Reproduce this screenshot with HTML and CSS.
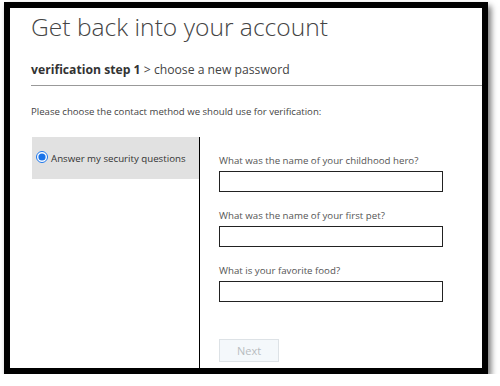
FILE: index.html
```html
<!doctype html>
<html lang="en">
<head>
    <meta charset="UTF-8">
    <title>Get back into your account</title>
    <link rel="stylesheet" href="styles.css">
</head>
<body>
<div class="frame">
    <div class="head">
        <h1 class="title">Get back into your account</h1>
        <div class="steps"><b>verification step 1</b> &gt; choose a new password</div>
    </div>
    <p class="intro">Please choose the contact method we should use for verification:</p>
    <div class="body">
        <div class="methods">
            <label class="method active">
                <input type="radio" name="method" checked>
                <span>Answer my security questions</span>
            </label>
        </div>
        <div class="questions">
            <div class="field">
                <div class="q">What was the name of your childhood hero?</div>
                <input type="text" class="answer">
            </div>
            <div class="field">
                <div class="q">What was the name of your first pet?</div>
                <input type="text" class="answer">
            </div>
            <div class="field">
                <div class="q">What is your favorite food?</div>
                <input type="text" class="answer">
            </div>
            <button class="next" disabled>Next</button>
        </div>
    </div>
</div>
</body>
</html>
```

FILE: styles.css
```css
*{
    padding: 0;
    margin: 0;
    box-sizing: border-box;
}
body{
    background-color: #ffffff;
    font-family: "Open Sans", "Noto Sans", sans-serif;
    color: #333333;
}

.frame{
    margin: 2px 0 0 4px;
    width: 484px;
    height: 372px;
    border: 6px solid #000000;
    background-color: #ffffff;
    box-shadow: 3px 4px 6px rgba(0, 0, 0, 0.55);
    display: flex;
    flex-direction: column;
}

.head{
    margin-left: 21px;
    border-bottom: 1px solid #999999;
}
.title{
    font-weight: 300;
    font-size: 24.6px;
    line-height: 34px;
    padding-top: 2px;
    color: #444444;
}
.steps{
    font-size: 12.2px;
    line-height: 18px;
    color: #444444;
    padding: 17px 0 6px;
}
.steps b{
    font-weight: 700;
    color: #333333;
}

.intro{
    font-size: 9.6px;
    line-height: 14px;
    color: #444444;
    margin: 19px 0 0 21px;
}

.body{
    flex: 1;
    display: flex;
    margin: 18px 0 0 22px;
}
.methods{
    width: 168px;
    border-right: 1px solid #000000;
}
.method{
    display: flex;
    align-items: center;
    height: 42px;
    padding-left: 4px;
    background-color: #e1e1e1;
    font-size: 9.7px;
    color: #333333;
}
.method input{
    width: 12px;
    height: 12px;
    margin: -2px 3px 0 0;
    accent-color: #1a73e8;
}

.questions{
    flex: 1;
    padding: 17px 0 0 19px;
}
.field{
    margin-bottom: 17px;
}
.q{
    font-size: 9.7px;
    line-height: 14px;
    color: #555555;
    margin-bottom: 3px;
}
.answer{
    display: block;
    width: 224px;
    height: 21px;
    border: 1px solid #222222;
    background-color: #ffffff;
}
.next{
    margin-top: 20px;
    width: 60px;
    height: 23px;
    border: 1px solid #dde2e6;
    background-color: #f4f8fb;
    color: #b8bcc0;
    font-family: "Open Sans", "Noto Sans", sans-serif;
    font-size: 11px;
}
```
